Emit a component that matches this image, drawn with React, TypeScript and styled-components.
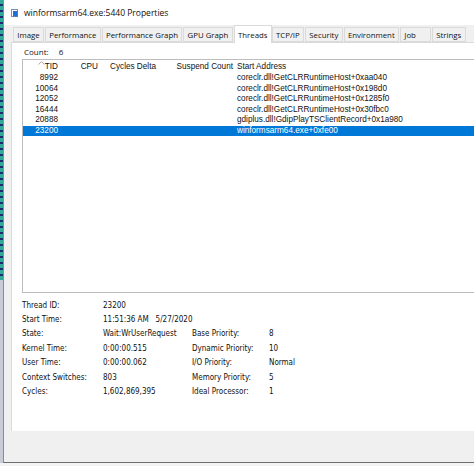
import React from 'react';
import styled, { createGlobalStyle } from 'styled-components';

const GlobalStyle = createGlobalStyle`
  html, body {
    margin: 0;
    padding: 0;
    background: #ffffff;
  }
  body {
    width: 474px;
    height: 466px;
    overflow: hidden;
  }
`;

const uiFont = `"Open Sans", "Noto Sans", sans-serif`;
const listFont = `"Liberation Sans", Arial, sans-serif`;
const infoFont = `"DejaVu Sans Condensed", "DejaVu Sans", sans-serif`;

const Desktop = styled.div`
  display: flex;
  width: 474px;
  height: 466px;
  overflow: hidden;
  background: #f3f3f3;
`;

const BackWindow = styled.div`
  flex: none;
  width: 3px;
  height: 463px;
  background:
    linear-gradient(to bottom, transparent 0 280px, #c9cbd6 280px 100%),
    repeating-linear-gradient(to bottom, #33a99c 0 4px, #1d2c6e 4px 6px);
`;

const Window = styled.div`
  flex: none;
  width: 620px;
  height: 463px;
  display: flex;
  flex-direction: column;
  border-left: 1px solid #8c8c8c;
  border-bottom: 1px solid #6e6e6e;
  box-sizing: border-box;
`;

const TitleBar = styled.div`
  flex: none;
  height: 25px;
  display: flex;
  align-items: center;
  gap: 6px;
  padding-left: 7px;
  background: #ffffff;
  font-family: ${uiFont};
  font-size: 8.5px;
  color: #111;
`;

const Body = styled.div`
  flex: 1;
  display: flex;
  flex-direction: column;
  background: #f0f0f0;
  padding: 2px 0 31px 7px;
  min-height: 0;
`;

const TabBar = styled.div`
  flex: none;
  display: flex;
  align-items: flex-end;
  height: 15px;
  padding-left: 2px;
  font-family: ${uiFont};
  font-size: 7.8px;
  color: #111;
`;

const Tab = styled.div<{ $active?: boolean; $minWidth?: number }>`
  position: relative;
  box-sizing: border-box;
  display: flex;
  align-items: center;
  padding: 0 3.3px;
  min-width: ${p => (p.$minWidth ? `${p.$minWidth}px` : 'auto')};
  height: ${p => (p.$active ? '18px' : '15px')};
  margin-bottom: ${p => (p.$active ? '-1px' : '0')};
  margin-right: ${p => (p.$active ? '0' : '1px')};
  background: ${p => (p.$active ? '#ffffff' : '#f0f0f0')};
  border: 1px solid #dadada;
  border-bottom: ${p => (p.$active ? 'none' : '1px solid #dadada')};
  z-index: ${p => (p.$active ? 1 : 0)};
`;

const Panel = styled.div`
  flex: 1;
  display: flex;
  flex-direction: column;
  background: #ffffff;
  border-top: 1px solid #dadada;
  border-left: 1px solid #dadada;
  padding-left: 10px;
  min-height: 0;
`;

const CountRow = styled.div`
  display: flex;
  gap: 10px;
  height: 12px;
  margin-top: 2px;
  padding-left: 2px;
  align-items: center;
  font-family: ${uiFont};
  font-size: 8px;
  color: #111;
`;

const ListBox = styled.div`
  box-sizing: border-box;
  width: 470px;
  height: 234px;
  margin-top: 2px;
  border: 1px solid #bdbdbd;
  background: #ffffff;
  font-family: ${listFont};
  font-size: 8.2px;
  color: #111;
`;

const cols = '38px 40px 58px 77px 1fr';

const HeaderRow = styled.div`
  position: relative;
  display: grid;
  grid-template-columns: ${cols};
  height: 13px;
  align-items: center;
`;

const Row = styled.div<{ $selected?: boolean }>`
  display: grid;
  grid-template-columns: ${cols};
  height: 10.5px;
  align-items: center;
  background: ${p => (p.$selected ? '#0078d7' : 'transparent')};
  color: ${p => (p.$selected ? '#ffffff' : '#111')};
`;

const Cell = styled.div<{ $left?: boolean }>`
  text-align: ${p => (p.$left ? 'left' : 'right')};
  padding: ${p => (p.$left ? '0 0 0 1px' : '0 3px 0 0')};
  white-space: nowrap;
  line-height: 10px;
`;

const SortArrow = styled.svg`
  position: absolute;
  left: 15px;
  top: 1px;
`;

const InfoGrid = styled.div`
  display: grid;
  grid-template-columns: 81px 89px 77px 1fr;
  grid-auto-rows: 14.4px;
  align-items: center;
  margin-top: 5px;
  font-family: ${infoFont};
  font-size: 8px;
  color: #111;
`;

const Label = styled.div`
  white-space: nowrap;
`;

const Value = styled.div<{ $span?: number }>`
  white-space: nowrap;
  grid-column: ${p => (p.$span ? `span ${p.$span}` : 'auto')};
`;

const Spacer = styled.div`
  grid-column: span 2;
`;

const AppIcon = () => (
  <svg width="7" height="8" viewBox="0 0 7 8">
    <rect x="0.5" y="0.5" width="6" height="7" fill="#ffffff" stroke="#7d8fb0" />
    <rect x="2" y="2" width="4.5" height="5.5" fill="#1f6fd1" />
  </svg>
);

const tabs = [
  'Image',
  'Performance',
  'Performance Graph',
  'GPU Graph',
  'Threads',
  'TCP/IP',
  'Security',
  'Environment',
  'Job',
  'Strings',
];

const threads = [
  { tid: '8992', addr: 'coreclr.dll!GetCLRRuntimeHost+0xaa040' },
  { tid: '10064', addr: 'coreclr.dll!GetCLRRuntimeHost+0x198d0' },
  { tid: '12052', addr: 'coreclr.dll!GetCLRRuntimeHost+0x1285f0' },
  { tid: '16444', addr: 'coreclr.dll!GetCLRRuntimeHost+0x30fbc0' },
  { tid: '20888', addr: 'gdiplus.dll!GdipPlayTSClientRecord+0x1a980' },
  { tid: '23200', addr: 'winformsarm64.exe+0xfe00', selected: true },
];

const App: React.FC = () => {
  return (
    <>
      <GlobalStyle />
      <Desktop>
        <BackWindow />
        <Window>
          <TitleBar>
            <AppIcon />
            <span>winformsarm64.exe:5440 Properties</span>
          </TitleBar>
          <Body>
            <TabBar>
              {tabs.map(t => (
                <Tab key={t} $active={t === 'Threads'} $minWidth={t === 'Job' ? 31 : undefined}>
                  {t}
                </Tab>
              ))}
            </TabBar>
            <Panel>
              <CountRow>
                <span>Count:</span>
                <span>6</span>
              </CountRow>
              <ListBox>
                <HeaderRow>
                  <SortArrow width="7" height="4" viewBox="0 0 7 4">
                    <polyline points="0.5,3.5 3.5,0.7 6.5,3.5" fill="none" stroke="#a0a0a0" strokeWidth="0.9" />
                  </SortArrow>
                  <Cell>TID</Cell>
                  <Cell>CPU</Cell>
                  <Cell>Cycles Delta</Cell>
                  <Cell>Suspend Count</Cell>
                  <Cell $left>Start Address</Cell>
                </HeaderRow>
                {threads.map(t => (
                  <Row key={t.tid} $selected={t.selected}>
                    <Cell>{t.tid}</Cell>
                    <Cell />
                    <Cell />
                    <Cell />
                    <Cell $left>{t.addr}</Cell>
                  </Row>
                ))}
              </ListBox>
              <InfoGrid>
                <Label>Thread ID:</Label>
                <Value>23200</Value>
                <Spacer />
                <Label>Start Time:</Label>
                <Value $span={3}>11:51:36 AM&nbsp;&nbsp;&nbsp;5/27/2020</Value>
                <Label>State:</Label>
                <Value>Wait:WrUserRequest</Value>
                <Label>Base Priority:</Label>
                <Value>8</Value>
                <Label>Kernel Time:</Label>
                <Value>0:00:00.515</Value>
                <Label>Dynamic Priority:</Label>
                <Value>10</Value>
                <Label>User Time:</Label>
                <Value>0:00:00.062</Value>
                <Label>I/O Priority:</Label>
                <Value>Normal</Value>
                <Label>Context Switches:</Label>
                <Value>803</Value>
                <Label>Memory Priority:</Label>
                <Value>5</Value>
                <Label>Cycles:</Label>
                <Value>1,602,869,395</Value>
                <Label>Ideal Processor:</Label>
                <Value>1</Value>
              </InfoGrid>
            </Panel>
          </Body>
        </Window>
      </Desktop>
    </>
  );
};

export default App;
